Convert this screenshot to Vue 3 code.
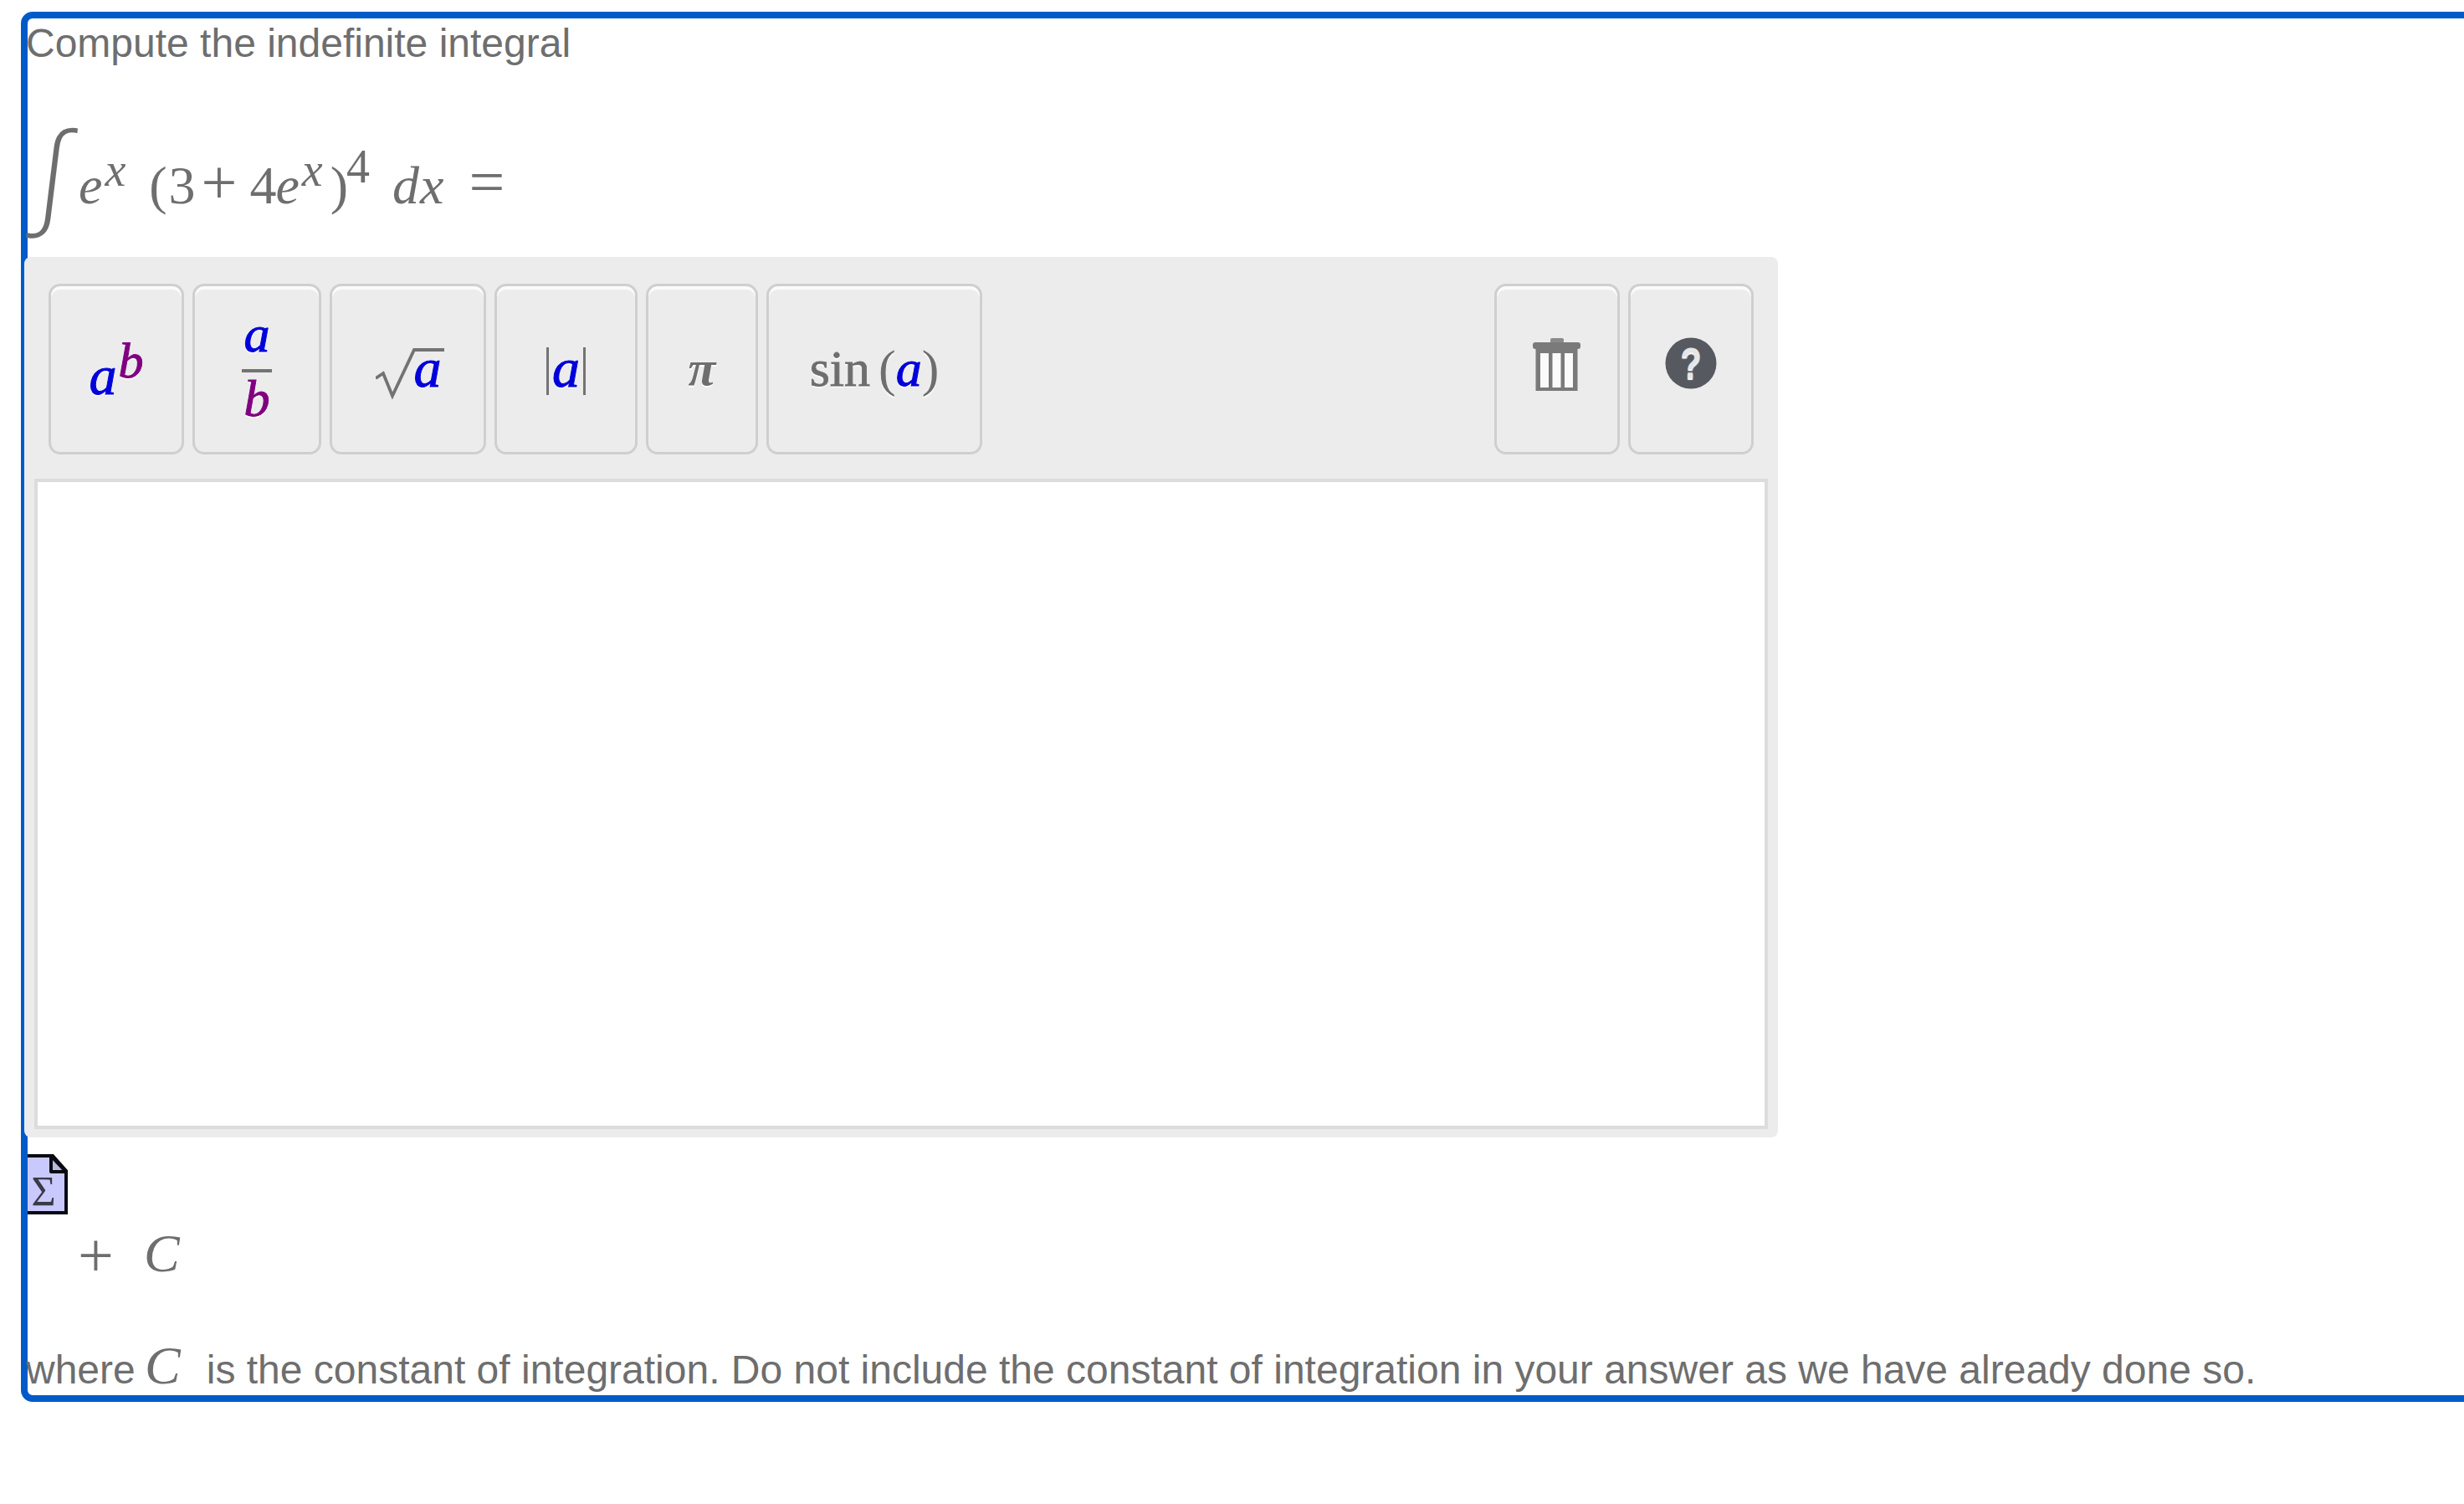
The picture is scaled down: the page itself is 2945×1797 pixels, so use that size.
<script setup>
const sentence = 'is the constant of integration. Do not include the constant of integration in your answer as we have already done so.'
</script>

<template>
  <div class="page">
    <div class="frame">
      <p class="prompt">Compute the indefinite integral</p>

      <div class="math formula">
        <span class="integral">∫</span>
        <i class="e1">e</i><sup class="sup-x sup-first">x</sup>
        <span class="open">(</span><span>3</span>
        <span class="plus">+</span>
        <span class="four">4</span><i class="e2">e</i><sup class="sup-x">x</sup>
        <span class="close">)</span><sup class="sup-4">4</sup>
        <i class="d">d</i><i>x</i>
        <span class="equals">=</span>
      </div>

      <div class="editor">
        <div class="toolbar">
          <button class="key w-power">
            <span class="cell power"><i class="blue">a</i><i class="purple raised">b</i></span>
          </button>
          <button class="key w-frac">
            <span class="fraction">
              <i class="blue">a</i>
              <span class="bar"></span>
              <i class="purple">b</i>
            </span>
          </button>
          <button class="key w-root">
            <span class="cell root">
              <svg class="radical" width="84" height="62" viewBox="0 0 84 62">
                <polyline points="0,37 9,31 20,58 46,3 82,3" fill="none" stroke="#737373" stroke-width="3.8" />
              </svg>
              <i class="blue overlined">a</i>
            </span>
          </button>
          <button class="key w-abs">
            <span class="cell"><span class="pipe"></span><i class="blue abs-a">a</i><span class="pipe"></span></span>
          </button>
          <button class="key w-pi">
            <span class="cell"><i class="pi">π</i></span>
          </button>
          <button class="key w-sin">
            <span class="cell sin-cell"><span class="sin">sin</span><span class="paren">(</span><i class="blue">a</i><span class="paren">)</span></span>
          </button>

          <button class="key w-tool push">
            <svg class="tool" width="58" height="64" viewBox="0 0 58 64">
              <rect x="21" y="0" width="16" height="6" rx="2" fill="#8a8a8a" />
              <rect x="0" y="5" width="57" height="8" rx="3" fill="#7a7a7a" />
              <path d="M3.5 13 H53.5 V63 H3.5 Z" fill="#7a7a7a" />
              <rect x="9" y="18" width="10" height="41" fill="#fafafa" />
              <rect x="23.5" y="18" width="10" height="41" fill="#fafafa" />
              <rect x="38" y="18" width="10" height="41" fill="#fafafa" />
            </svg>
          </button>
          <button class="key w-tool">
            <svg class="tool help" width="62" height="64" viewBox="0 0 62 64">
              <circle cx="31" cy="32" r="30.5" fill="#565a60" />
              <text transform="translate(31,50) scale(.72,.9)" text-anchor="middle" class="help-mark">?</text>
            </svg>
          </button>
        </div>
        <div class="answer"></div>
      </div>

      <svg class="doc" width="48" height="72" viewBox="0 0 48 72">
        <path d="M-3 2 H30 L46 20 V70 H-3 Z" fill="#c9c9fd" stroke="#0a0a14" stroke-width="4" />
        <path d="M28 2 V21 H46 Z" fill="#b9b9de" stroke="#0a0a14" stroke-width="4" stroke-linejoin="round" />
        <text x="19" y="61" text-anchor="middle" class="doc-mark">Σ</text>
      </svg>

      <div class="math plus-c">
        <span class="plus-c-sign">+</span><i class="big-c">C</i>
      </div>

      <p class="note">where <i class="math note-c">C</i><span class="rest">{{ sentence }}</span></p>
    </div>
  </div>
</template>

<style>
html, body { margin: 0; overflow: hidden; background: #fff; }
</style>

<style scoped>
.page {
  width: 2945px;
  height: 1797px;
  overflow: hidden;
  padding: 14px 0 0 25px;
  box-sizing: border-box;
  background: #fff;
}
.frame {
  width: 3000px;
  height: 1661px;
  box-sizing: border-box;
  border: 8px solid #005bc9;
  border-radius: 14px;
  color: #6e6e6e;
  font-family: "Liberation Sans", Arial, sans-serif;
}
.prompt {
  margin: 0 0 0 -2px;
  height: 50px;
  font-size: 48px;
  line-height: 60px;
}
.math { font-family: "Liberation Serif", serif; }
.formula {
  display: flex;
  align-items: baseline;
  height: 235px;
  box-sizing: border-box;
  padding-top: 28px;
  font-size: 64px;
  line-height: 235px;
  color: #6e6e6e;
}
.integral {
  flex: 0 0 61px;
  font-family: "Open Sans", "Noto Sans", sans-serif;
  font-weight: 300;
  font-size: 132px;
  line-height: 0;
  transform: translate(8px, 10px) skewX(-7deg);
}
.formula sup { line-height: 0; vertical-align: baseline; }
.sup-x { font-style: italic; font-size: 56px; margin: 0 23px 0 3px; transform: translateY(-21px); }
.sup-first { margin-right: 28px; }
.sup-4 { font-size: 56px; transform: translateY(-25px); margin: 0 27px 0 -2px; }
.open { margin-right: 2px; }
.plus { font-size: 76px; margin: 0 15px 0 7px; }
.four { margin-right: -1px; }
.e2 { margin-right: 0; }
.close { margin-left: -14px; }
.d { margin-right: 1px; }
.equals { font-size: 76px; margin-left: 30px; }

.editor {
  width: 2096px;
  height: 1052px;
  margin-left: -4px;
  background: #ececec;
  border-radius: 8px;
  display: flex;
  flex-direction: column;
}
.toolbar {
  display: flex;
  gap: 10px;
  padding: 32px 29px 0;
  height: 204px;
  flex-shrink: 0;
}
.key {
  height: 204px;
  box-sizing: border-box;
  border: 3px solid #cfcfcf;
  border-radius: 14px;
  background: #ececec;
  box-shadow: inset 0 4px 1px #fbfbfb;
  padding: 0;
  display: flex;
  flex-direction: column;
  align-items: center;
  font-family: "Liberation Serif", serif;
  color: #6e6e6e;
  text-shadow: 0 2px 1px #fff;
}
.w-power { width: 162px; }
.w-frac { width: 154px; }
.w-root { width: 187px; }
.w-abs { width: 171px; }
.w-pi { width: 134px; }
.w-sin { width: 258px; }
.w-tool { width: 150px; }
.push { margin-left: auto; }

.cell {
  display: flex;
  align-items: baseline;
  justify-content: center;
  height: 116px;
  font-size: 66px;
  line-height: 116px;
  margin-top: 40px;
}
.power { margin-top: 49px; }
.blue { color: #0000dc; -webkit-text-stroke: 1px #0000dc; }
.purple { color: #800080; -webkit-text-stroke: 1px #800080; }
.raised { transform: translateY(-20px); font-size: 60px; margin-left: 2px; }

.fraction {
  display: flex;
  flex-direction: column;
  align-items: center;
  font-size: 62px;
  line-height: 58px;
  margin-top: 28px;
}
.bar {
  width: 36px;
  height: 4px;
  background: #737373;
  margin: 13px 0 2px;
}

.root { position: relative; padding-left: 46px; }
.radical { position: absolute; left: 0; top: 33px; }
.overlined { margin-right: -1px; }

.pipe {
  width: 3px;
  height: 57px;
  background: #737373;
  align-self: center;
  margin-top: 6px;
}
.abs-a { margin: 0 4px; }
.pi { font-size: 60px; font-weight: 700; color: #6e6e6e; }
.sin-cell { font-size: 62px; }
.sin { margin-right: 10px; font-weight: 400; -webkit-text-stroke: 0.8px #6e6e6e; }
.paren { margin: 0; }

.tool { margin-top: 62px; }
.help { margin-top: 60px; }
.help-mark {
  font-family: "Liberation Sans", sans-serif;
  font-weight: 700;
  font-size: 58px;
  fill: #e6e6e6;
}

.answer {
  flex: 0 0 auto;
  height: 777px;
  margin: 29px 12px 13px;
  box-sizing: border-box;
  border: 4px solid #dcdcdc;
  background: #fff;
}

.doc {
  display: block;
  margin-top: 20px;
}
.doc-mark {
  font-family: "Liberation Serif", serif;
  font-size: 50px;
  fill: #3a3a48;
}
.plus-c {
  display: flex;
  align-items: baseline;
  padding-left: 60px;
  margin-top: 2px;
  height: 90px;
  font-size: 60px;
  line-height: 80px;
}
.plus-c-sign { font-size: 76px; font-weight: 400; margin-right: 36px; transform: translateY(6px); }
.big-c { font-size: 64px; }
.note {
  margin: 59px 0 0 -2px;
  font-size: 48px;
  line-height: 60px;
  white-space: nowrap;
}
.note-c { font-size: 64px; margin: 0 31px 0 -2px; }
</style>
